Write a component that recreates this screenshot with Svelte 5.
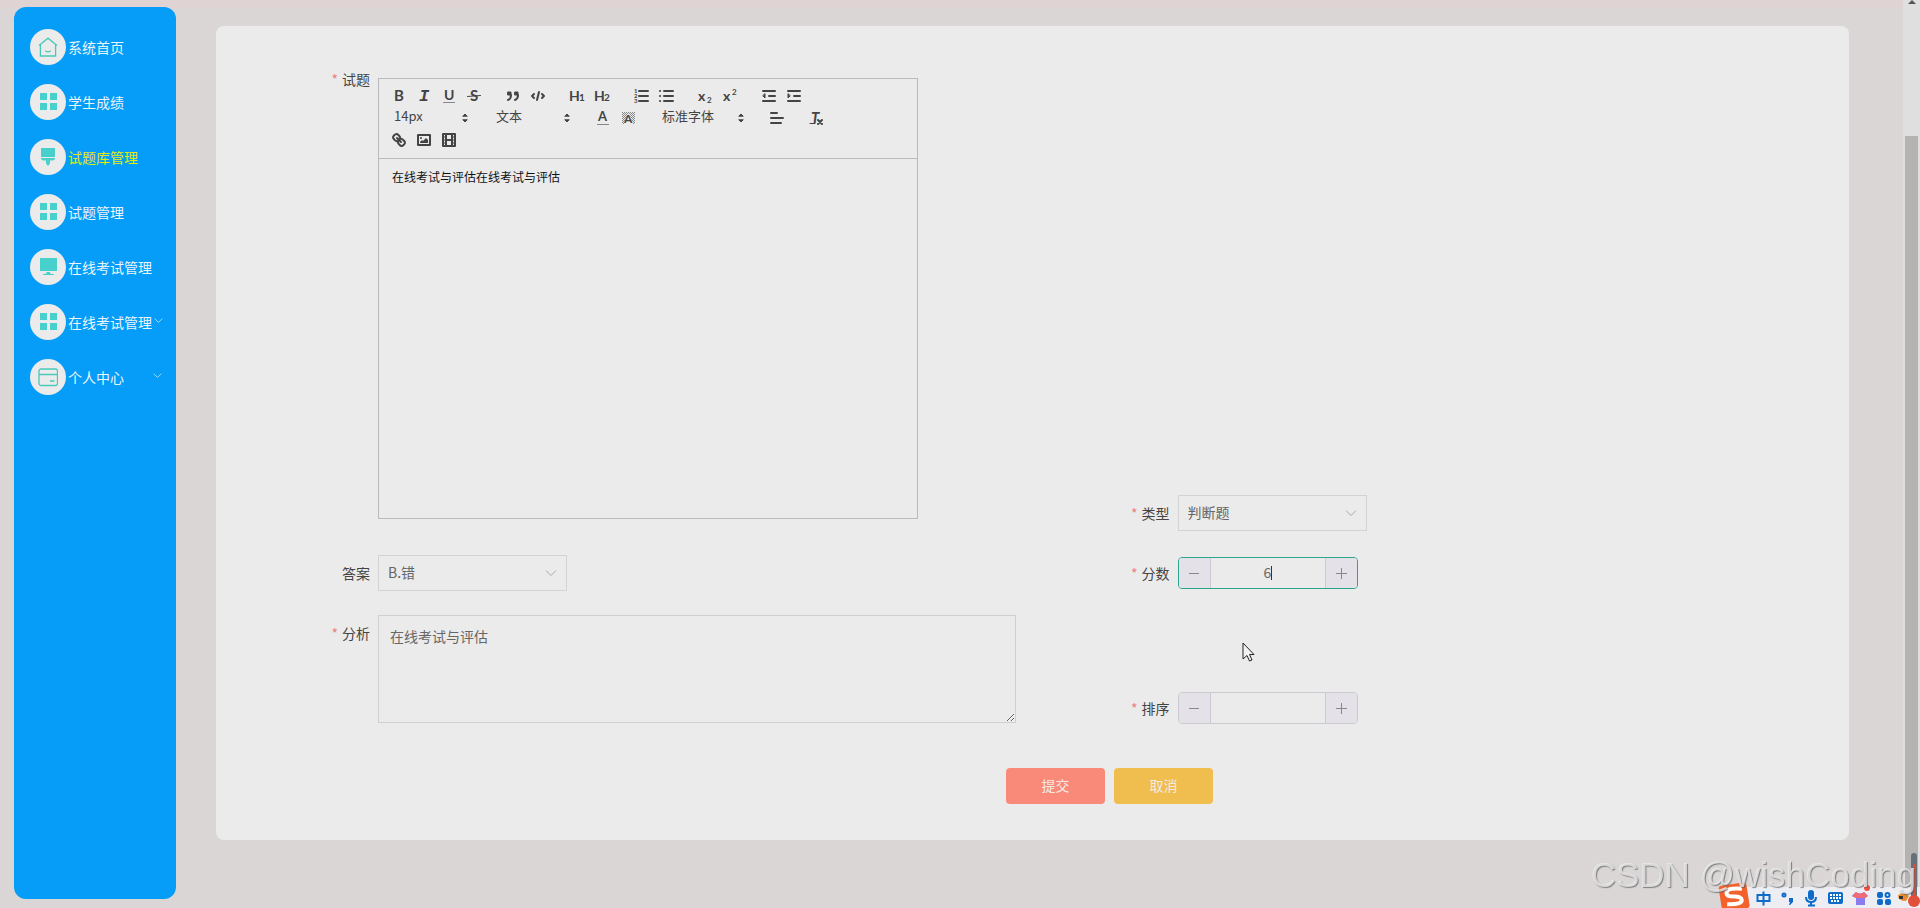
<script lang="ts">
	type MenuItem = {
		label: string;
		icon: string;
		active?: boolean;
		expandable?: boolean;
	};

	const menu: MenuItem[] = [
		{ label: '系统首页', icon: 'home' },
		{ label: '学生成绩', icon: 'grid' },
		{ label: '试题库管理', icon: 'brush', active: true },
		{ label: '试题管理', icon: 'grid' },
		{ label: '在线考试管理', icon: 'monitor' },
		{ label: '在线考试管理', icon: 'grid', expandable: true },
		{ label: '个人中心', icon: 'card', expandable: true }
	];

	// toolbar rows, each row is a list of button groups
	const firstRow = [
		['bold', 'italic', 'underline', 'strike'],
		['quote', 'code'],
		['h1', 'h2'],
		['ordered', 'bullet'],
		['sub', 'super'],
		['outdent', 'indent']
	];

	let answer = $state('B.错');
	let type = $state('判断题');
	let analysis = $state('在线考试与评估');
	let numbers: Record<string, string> = $state({ score: '6', sort: '' });

	function step(key: string, by: number) {
		numbers[key] = String(Math.max(0, Number(numbers[key]) + by));
	}
</script>

{#snippet menuIcon(name: string)}
	<svg class="menu-icon" viewBox="0 0 20 20" width="20" height="20" aria-hidden="true">
		{#if name === 'home'}
			<path class="line" d="M1 8.5 10 1.2 19 8.5M2.4 7.6V19h15.2V7.6M7.2 14q2.8 1.6 5.6 0" />
		{:else if name === 'grid'}
			<path d="M2 1h7v7H2zM12 1h7v7h-7zM2 11h7v7H2zM12 11h7v7h-7z" />
		{:else if name === 'brush'}
			<path d="M3 1h14v9H3zM3 11h14q0 2.500-3 2.500h-2v3L10 19l-2-2.500v-3H6q-3 0-3-2.500z" />
		{:else if name === 'monitor'}
			<path d="M2 1h17v13H2zM8.5 15h3.5v1.4l4 .8v.8H5v-.8l3.500-.8z" />
		{:else}
			<rect class="line" x="1" y="2" width="18.500" height="16.500" rx="2" />
			<path class="line" d="M1 7.500h18.500M12 14h4.500" />
		{/if}
	</svg>
{/snippet}

{#snippet toolIcon(name: string)}
	<svg class="tool-icon" viewBox="0 0 18 18" width="18" height="18" aria-hidden="true">
		{#if name === 'bold'}
			<text x="4" y="14" font-size="15">B</text>
		{:else if name === 'italic'}
			<text class="mono" x="4" y="14" font-size="17">I</text>
		{:else if name === 'underline'}
			<text class="regular" x="4" y="13" font-size="14">U</text>
			<rect class="fill soft" x="3" y="15" width="12" height="1" />
		{:else if name === 'strike'}
			<text class="regular" x="5" y="14" font-size="15">S</text>
			<path class="thin" d="M15.500 8.500l-13 1" />
		{:else if name === 'quote'}
			<rect class="both" x="4" y="5" width="3" height="3" />
			<rect class="both" x="11" y="5" width="3" height="3" />
			<path d="M7 8c0 4-3 5-3 5M14 8c0 4-3 5-3 5" />
		{:else if name === 'code'}
			<path d="M5 7 3 9l2 2M13 7l2 2-2 2M10 5 8 13" />
		{:else if name === 'h1' || name === 'h2'}
			<text x="1" y="14" font-size="14">H</text>
			<text x="11" y="14" font-size="10">{name[1]}</text>
		{:else if name === 'ordered'}
			<path d="M7 4h9M7 9h9M7 14h9" />
			<text x="2" y="6" font-size="6">1</text>
			<text x="2" y="11" font-size="6">2</text>
			<text x="2" y="16" font-size="6">3</text>
		{:else if name === 'bullet'}
			<path d="M7 4h9M7 9h9M7 14h9M3 4h.1M3 9h.1M3 14h.1" />
		{:else if name === 'sub'}
			<text x="2" y="14" font-size="14">x</text>
			<text class="regular" x="11" y="16" font-size="8">2</text>
		{:else if name === 'super'}
			<text x="2" y="14" font-size="14">x</text>
			<text class="regular" x="11" y="8" font-size="8">2</text>
		{:else if name === 'outdent'}
			<path d="M3 14h12M3 4h12M9 9h6" />
			<path class="both" d="M5 7v4L3 9z" />
		{:else if name === 'indent'}
			<path d="M3 14h12M3 4h12M9 9h6" />
			<path class="both" d="M3 7v4l2-2z" />
		{:else if name === 'color'}
			<text x="4" y="12" font-size="13">A</text>
			<rect class="fill soft" x="3" y="15" width="12" height="1" />
		{:else if name === 'background'}
			<defs>
				<pattern id="hatch" width="2" height="2" patternUnits="userSpaceOnUse">
					<path class="fill" d="M0 0h1v1H0zM1 1h1v1H1z" />
				</pattern>
			</defs>
			<rect x="3" y="3" width="13" height="12" fill="url(#hatch)" stroke="none" opacity="0.6" />
			<path class="knock" d="M9.500 6 6 14h7z" />
			<text x="5" y="14" font-size="12">A</text>
		{:else if name === 'align'}
			<path d="M3 4h6M3 9h12M3 14h10" />
		{:else if name === 'clean'}
			<text class="slant" x="4" y="14" font-size="15">T</text>
			<path d="m11 11 4 4m0-4-4 4" />
			<path class="thin" d="M3 14.500h5" />
		{:else if name === 'link'}
			<path
				d="M7 7l4 4M8.900 4.600a3.500 3.500 0 0 1 .4 4.700A3.500 3.500 0 0 1 4.600 8.900C3.200 7.500 2 6.400 4.200 4.200S7.500 3.200 8.900 4.600zM13.400 9.100a3.500 3.500 0 0 0-4.700-.4 3.500 3.500 0 0 0 .4 4.700c1.400 1.400 2.500 2.600 4.700.4s1-3.300-.4-4.700z"
			/>
		{:else if name === 'image'}
			<rect x="3" y="4" width="12" height="10" />
			<circle class="fill" cx="6" cy="7" r="1" />
			<path class="fill" d="M5 12v-1l2-2 1 1 3-3 2 2v3z" />
		{:else if name === 'video'}
			<rect x="3" y="3" width="12" height="12" />
			<path d="M6 3v12M12 3v12M6 9h6" />
			<path class="thin" d="M3 6h3M3 9h3M3 12h3M12 6h3M12 9h3M12 12h3" />
		{/if}
	</svg>
{/snippet}

{#snippet tools(names: string[])}
	<span class="formats">
		{#each names as name}
			<button type="button" class="tool" aria-label={name}>{@render toolIcon(name)}</button>
		{/each}
	</span>
{/snippet}

{#snippet picker(label: string, value: string, wide: boolean)}
	<span class="picker" class:wide>
		<select aria-label={label}><option>{value}</option></select>
		<svg class="tool-icon" viewBox="0 0 18 18" width="18" height="18" aria-hidden="true">
			<path class="both" d="M7 11l2 2 2-2zM7 7l2-2 2 2z" />
		</svg>
	</span>
{/snippet}

{#snippet chevron(size: number)}
	<svg class="chevron" viewBox="0 0 12 12" width={size} height={size} aria-hidden="true">
		<path d="M1 3.500l5 5 5-5" />
	</svg>
{/snippet}

{#snippet stepper(key: string, focused: boolean)}
	<div class="stepper" class:focused>
		<button type="button" aria-label="减少" onclick={() => step(key, -1)}>
			<svg viewBox="0 0 12 12" width="12" height="12"><path d="M1 6.500h10" /></svg>
		</button>
		<input id={key} type="text" bind:value={numbers[key]} />
		{#if focused}<span class="caret"></span>{/if}
		<button type="button" aria-label="增加" onclick={() => step(key, 1)}>
			<svg viewBox="0 0 12 12" width="12" height="12"><path d="M1 6.500h11M6.500 1v11" /></svg>
		</button>
	</div>
{/snippet}

<div class="page">
	<nav class="sidebar">
		{#each menu as item}
			{#if item.expandable}
				<button type="button" class="menu-item">
					<span class="circle">{@render menuIcon(item.icon)}</span>
					<span class="menu-text">{item.label}</span>
					{@render chevron(9)}
				</button>
			{:else}
				<a class="menu-item" class:active={item.active} href="#{item.icon}">
					<span class="circle">{@render menuIcon(item.icon)}</span>
					<span class="menu-text">{item.label}</span>
				</a>
			{/if}
		{/each}
	</nav>

	<main>
		<form class="card" onsubmit={(e) => e.preventDefault()}>
			<div class="fields">
				<div class="field top">
					<span class="label required" id="question">试题</span>
					<div class="editor">
						<div class="toolbar">
							<div class="tool-row">
								{#each firstRow as group}
									{@render tools(group)}
								{/each}
							</div>
							<div class="tool-row">
								{@render picker('字号', '14px', false)}
								{@render picker('标题', '文本', false)}
								{@render tools(['color', 'background'])}
								{@render picker('字体', '标准字体', true)}
								{@render tools(['align'])}
								{@render tools(['clean'])}
							</div>
							<div class="tool-row">
								{@render tools(['link', 'image', 'video'])}
							</div>
						</div>
						<div class="content" contenteditable="true" role="textbox" tabindex="0" aria-labelledby="question">
							在线考试与评估在线考试与评估
						</div>
					</div>
				</div>

				<div class="field">
					<label class="label required" for="type">类型</label>
					<div class="select">
						<select id="type" bind:value={type}>
							<option>判断题</option>
							<option>单选题</option>
						</select>
						{@render chevron(12)}
					</div>
				</div>

				<div class="field">
					<label class="label" for="answer">答案</label>
					<div class="select">
						<select id="answer" bind:value={answer}>
							<option>A.对</option>
							<option>B.错</option>
						</select>
						{@render chevron(12)}
					</div>
				</div>

				<div class="field">
					<label class="label required" for="score">分数</label>
					{@render stepper('score', true)}
				</div>

				<div class="field top">
					<label class="label required" for="analysis">分析</label>
					<textarea id="analysis" bind:value={analysis}></textarea>
				</div>

				<div class="field">
					<label class="label required" for="sort">排序</label>
					{@render stepper('sort', false)}
				</div>
			</div>

			<div class="actions">
				<button type="submit" class="submit">提交</button>
				<button type="button" class="cancel">取消</button>
			</div>
		</form>
	</main>

	<div class="scrollbar">
		<svg viewBox="0 0 8 4" width="8" height="4"><path d="M4 0l4 4H0z" /></svg>
		<div class="thumb"></div>
	</div>
</div>

<svg class="cursor" viewBox="0 0 13 20" width="13" height="20" aria-hidden="true">
	<path d="M1 1v16l4-3.500 2.500 5.500 2.500-1-2.500-5.500h4.500z" />
</svg>

<div class="ime">
	<svg viewBox="0 0 202 26" width="202" height="26" aria-hidden="true">
		<path class="bar" d="M14 5h188v21H14z" />
		<g transform="rotate(-9 16 14)">
			<rect x="2" y="2" width="28" height="26" rx="3" fill="#f2622a" />
			<path d="M25 8Q9 4 9 10.500q0 3 7 4t7 4.500q0 5-15 2" fill="none" stroke="#fff" stroke-width="4" />
		</g>
		<g transform="translate(0 2)">
			<path class="blue-line" d="M39.500 11h12v6h-12zM45.500 7.500v14" />
			<circle class="blue-line" cx="66" cy="11" r="1.500" />
			<path class="blue" d="M71 14h4v4l-3 3h-1l1-3h-1z" />
			<rect class="blue" x="90" y="6" width="6" height="10" rx="3" />
			<path class="blue-line" d="M88 13q0 5 5 5t5-5M93 18v3M90 21.500h7" />
			<rect class="blue" x="110" y="8" width="15" height="12" rx="2" />
			<path d="M112 11h11M112 14h11M113 17h9" stroke="#fff" stroke-width="2" stroke-dasharray="2 1" />
			<path d="M138 8q4 3 8 0l4 4-3 2v7h-9v-7l-4-2z" fill="#8d7cf0" />
			<path d="M138 8q4 3 8 0l4 4-3 2h-9l-4-2z" fill="#ef6a76" />
			<circle cx="149" cy="4" r="3" fill="#f0503c" />
			<rect class="blue" x="159" y="8" width="6" height="6" rx="2" />
			<circle cx="169.500" cy="11" r="2" class="blue-line" />
			<rect class="blue" x="159" y="15" width="6" height="6" rx="2" />
			<rect class="blue" x="167" y="15" width="6" height="6" rx="2" />
			<path d="M180 11q7-4 11 1l-3 5q-8 0-8-6z" fill="#e98b2c" />
			<path d="M181 12h4v3h-4z" fill="#333" />
		</g>
	</svg>
</div>
<svg class="thermo" viewBox="0 0 16 56" width="16" height="56" aria-hidden="true">
	<rect x="7" y="1" width="6" height="50" rx="3" fill="#667078" />
	<rect x="9" y="12" width="3" height="36" fill="#dd4a38" />
	<circle cx="10" cy="49" r="6" fill="#e2503c" />
</svg>
<div class="watermark">CSDN @wishCoding</div>

<style>
	:global(body) {
		background: #dad6d6;
		font-family: 'Noto Sans CJK SC', 'Noto Sans', sans-serif;
		font-size: 14px;
		color: #444;
	}

	.page {
		box-sizing: border-box;
		display: flex;
		min-height: 100vh;
		background: linear-gradient(#dfd4d3 8px, transparent 8px);
	}

	button,
	input,
	select,
	textarea {
		box-sizing: border-box;
		margin: 0;
		font: inherit;
	}

	button {
		padding: 0;
		border: none;
		background: none;
		cursor: pointer;
	}

	.sidebar {
		box-sizing: border-box;
		display: flex;
		flex-direction: column;
		gap: 19px;
		width: 162px;
		flex: none;
		margin: 7px 0 9px 14px;
		padding: 22px 14px 0 16px;
		border-radius: 12px;
		background: #059df7;
	}

	.menu-item {
		display: flex;
		align-items: center;
		gap: 2px;
		height: 36px;
		color: #ebf4fb;
		text-decoration: none;
		white-space: nowrap;
	}

	.menu-item.active {
		color: #e3ea12;
	}

	.menu-text {
		padding-bottom: 1px;
	}

	.menu-item .chevron {
		margin: 0 0 4px auto;
		stroke: #d5ecfb;
	}

	.circle {
		display: flex;
		align-items: center;
		justify-content: center;
		width: 36px;
		height: 36px;
		flex: none;
		border-radius: 50%;
		background: #ebebeb;
	}

	.menu-icon {
		fill: #48d1cc;
	}

	.menu-icon .line {
		fill: none;
		stroke: #48c9bb;
		stroke-width: 1.3;
	}

	.chevron {
		flex: none;
		fill: none;
		stroke: #aaa;
	}

	main {
		flex: 1;
		min-width: 0;
		padding: 26px 54px 0 40px;
	}

	.card {
		padding: 35px 18px 36px 16px;
		border-radius: 8px;
		background: #ebebeb;
	}

	.fields {
		display: grid;
		grid-template-columns: 1fr 1fr;
		row-gap: 24px;
		align-items: end;
	}

	.field {
		display: flex;
		align-items: center;
		min-width: 0;
	}

	.field.top {
		align-items: flex-start;
	}

	.label {
		width: 138px;
		flex: none;
		padding-right: 8px;
		line-height: 36px;
		text-align: right;
		color: #444;
	}

	.required::before {
		content: '*';
		margin-right: 4px;
		color: #e88080;
	}

	.editor {
		box-sizing: border-box;
		width: 540px;
		margin: 17px 0 12px;
		border: 1px solid #bbb;
	}

	.toolbar {
		padding: 6px 7px 7px;
		border-bottom: 1px solid #bbb;
	}

	.tool-row {
		display: flex;
		gap: 14px;
		height: 22px;
	}

	.formats {
		display: flex;
	}

	.tool {
		display: flex;
		align-items: center;
		justify-content: center;
		width: 25px;
		height: 22px;
	}

	.tool-icon {
		fill: none;
		stroke: #444;
		stroke-width: 2;
		stroke-linecap: round;
		stroke-linejoin: round;
		overflow: visible;
	}

	.tool-icon text {
		fill: #444;
		stroke: none;
		font-family: Lato, sans-serif;
		font-weight: 700;
	}

	.tool-icon .slant {
		font-style: italic;
	}

	.tool-icon .mono {
		font-family: 'Liberation Mono', monospace;
		font-style: italic;
	}

	.tool-icon .fill {
		fill: #444;
		stroke: none;
	}

	.tool-icon .soft {
		fill: #888;
	}

	.tool-icon .knock {
		fill: #ebebeb;
		stroke: #ebebeb;
	}

	.tool-icon .both {
		fill: #444;
		stroke-width: 1;
	}

	.tool-icon .thin {
		stroke-width: 1;
	}

	.picker {
		display: grid;
		align-items: center;
		width: 88px;
	}

	.picker.wide {
		width: 96px;
	}

	.picker > *,
	.select > * {
		grid-area: 1 / 1;
	}

	.picker select {
		width: 100%;
		height: 22px;
		padding: 0 8px 4px;
		border: none;
		background: none;
		appearance: none;
		font-size: 13px;
		line-height: 18px;
		color: #444;
	}

	.picker .tool-icon {
		justify-self: end;
		pointer-events: none;
	}

	.content {
		box-sizing: border-box;
		height: 359px;
		padding: 9px 13px;
		font-size: 12px;
		line-height: 17px;
		color: #111;
		outline: none;
	}

	.select {
		display: grid;
		align-items: center;
		width: 189px;
	}

	.select select {
		width: 100%;
		height: 36px;
		padding: 0 9px 2px;
		border: 1px solid #d3d3d3;
		border-radius: 0;
		background: none;
		appearance: none;
		color: #666;
	}

	.select .chevron {
		justify-self: end;
		margin-right: 10px;
		pointer-events: none;
	}

	.stepper {
		box-sizing: border-box;
		display: grid;
		grid-template-columns: 32px 1fr 32px;
		width: 180px;
		height: 32px;
		border: 1px solid #ccc9d0;
		border-radius: 4px;
		overflow: hidden;
	}

	.stepper.focused {
		border-color: #2ba58c;
	}

	.stepper button {
		display: flex;
		align-items: center;
		justify-content: center;
		background: #e4e2e8;
	}

	.stepper button:first-child {
		border-right: 1px solid #ccc9d0;
	}

	.stepper button:last-child {
		grid-column: 3;
		border-left: 1px solid #ccc9d0;
	}

	.stepper svg {
		fill: none;
		stroke: #888;
	}

	.stepper input {
		grid-area: 1 / 2;
		min-width: 0;
		padding: 0 0 2px;
		border: none;
		background: #ebebeb;
		text-align: center;
		color: #666;
		outline: none;
	}

	.caret {
		grid-area: 1 / 2;
		align-self: center;
		justify-self: center;
		width: 1px;
		height: 14px;
		margin-left: 8px;
		background: #333;
	}

	textarea {
		flex: 1;
		min-width: 0;
		height: 108px;
		margin: 0 16px 3px 0;
		padding: 9px 11px;
		border: 1px solid #d0d0d0;
		background: none;
		line-height: 22px;
		color: #666;
		resize: both;
	}

	.actions {
		display: flex;
		justify-content: center;
		gap: 9px;
		margin-top: 42px;
		padding-left: 156px;
	}

	.actions button {
		width: 99px;
		height: 36px;
		padding-bottom: 2px;
		border-radius: 4px;
		color: #f3eae4;
	}

	.submit {
		background: #f98a79;
	}

	.cancel {
		background: #f0be4e;
	}

	.scrollbar {
		display: flex;
		flex-direction: column;
		align-items: center;
		width: 17px;
		flex: none;
		background: #dfdfdf;
	}

	.scrollbar path {
		fill: #555;
	}

	.thumb {
		flex: 1;
		width: 13px;
		margin: 132px 0 16px;
		background: #b4b3b2;
	}

	.cursor {
		position: absolute;
		left: 1242px;
		top: 642px;
		fill: #f2f2f2;
		stroke: #222;
	}

	.ime,
	.thermo,
	.watermark {
		position: fixed;
		right: 0;
		bottom: 0;
	}

	.ime {
		height: 26px;
	}

	.bar {
		fill: #eceef4;
	}

	.blue {
		fill: #0f6bc8;
	}

	.blue-line {
		fill: none;
		stroke: #0f6bc8;
		stroke-width: 2;
	}

	.watermark {
		right: 4px;
		bottom: 13px;
		font-family: 'Liberation Sans', Arial, sans-serif;
		font-size: 35px;
		line-height: 40px;
		white-space: nowrap;
		color: rgba(236, 236, 236, 0.8);
		text-shadow: 1px 1px 1px rgba(90, 90, 90, 0.7);
		pointer-events: none;
	}
</style>
